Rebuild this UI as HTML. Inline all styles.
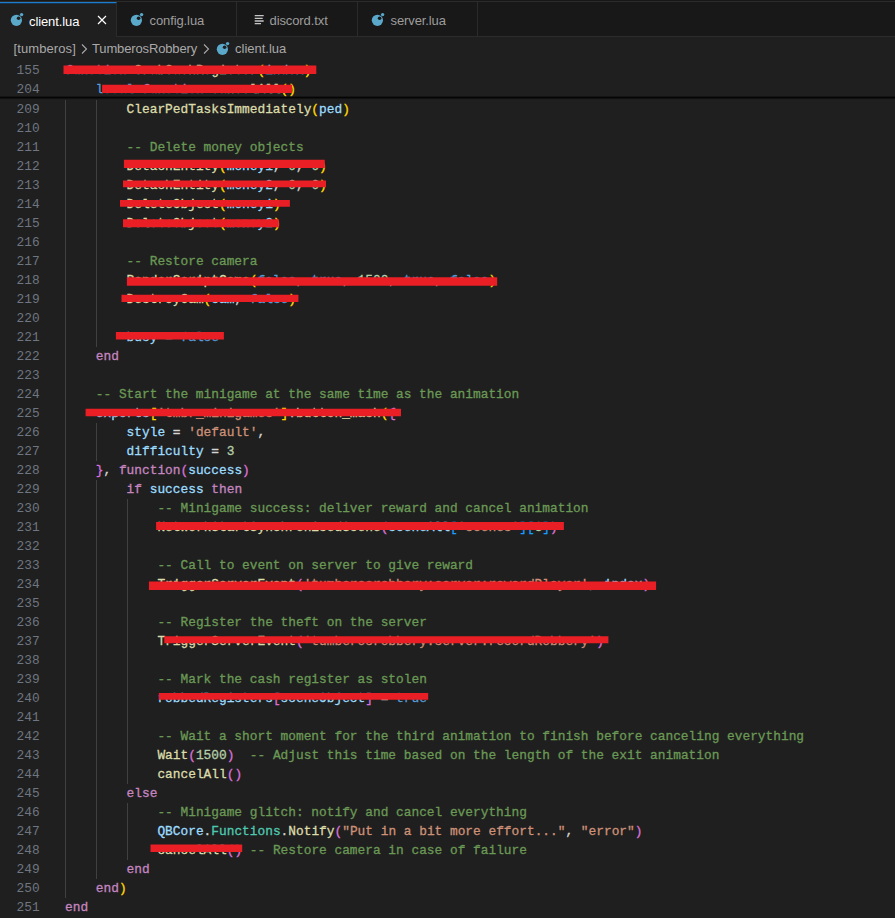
<!DOCTYPE html>
<html lang="en">
<head>
<meta charset="utf-8">
<title>client.lua - TumberosRobbery</title>
<style>
*{box-sizing:border-box;margin:0;padding:0}
html,body{width:895px;height:918px;overflow:hidden;background:#1f1f1f}
body{position:relative;font-family:"Liberation Sans",sans-serif;color:#ccc}
.titleedge{position:absolute;left:0;top:0;width:895px;height:2px;background:#181818;border-bottom:1px solid #2b2b2b}
.tabs{position:absolute;left:0;top:2px;width:895px;height:35px;background:#181818;border-bottom:1px solid #2b2b2b}
.tab{position:absolute;top:0;height:35px;border-right:1px solid #2b2b2b;font-size:13px;color:#9d9d9d;line-height:35px;white-space:nowrap}
.tab.active{background:#1f1f1f;color:#fff;height:35px;top:0;border-top:1px solid #1c7ccf;line-height:35px;box-shadow:inset 0 1px 0 rgba(0,110,200,.3)}
.tab .lbl{position:absolute;left:32.500px;top:0.500px;letter-spacing:-0.1px}.tab.active .lbl{left:29px;letter-spacing:-0.1px}
.tab svg.ic{position:absolute;left:12px;top:8.700px}.tab.active svg.ic{left:9px;top:7.900px}
.tab .x{position:absolute;left:97px;top:12px}
.crumbs{position:absolute;left:0;top:37px;width:895px;height:22px;background:#1f1f1f;font-size:13px;line-height:22px;color:#a9a9a9;white-space:nowrap}
.crumbs span{position:absolute;top:1px}.crumbs svg{position:absolute}
.editor{position:absolute;left:0;top:0;width:895px;height:918px;font-family:"Liberation Mono",monospace;font-size:12.83px;line-height:19px;white-space:pre}
.ln{position:absolute;left:0;width:895px;height:19px}
.no{position:absolute;left:0;width:39.6px;text-align:right;color:#6e7681}
.cd{position:absolute;top:0;-webkit-text-stroke:0.3px;transform:scaleY(1.045);transform-origin:0 14.300px}
.g{position:absolute;top:0;width:1px;height:19px;background:#404040}
.sticky-shadow{position:absolute;left:0;top:96px;width:895px;height:4px;background:linear-gradient(rgba(0,0,0,.35) 0,rgba(0,0,0,.35) 1px,#050505 1px,#050505 2px,rgba(0,0,0,.45) 2px,rgba(0,0,0,.45) 3px,rgba(0,0,0,0.08) 3px,rgba(0,0,0,0.08) 4px)}
.k{color:#c586c0}.b{color:#569cd6}.f{color:#dcdcaa}.v{color:#9cdcfe}.c{color:#6a9955}.s{color:#ce9178}
.n{color:#b5cea8}.w{color:#d4d4d4}.y{color:#ffd700}.p{color:#da70d6}.u{color:#179fff}.t{color:#4ec9b0}
svg.strokes{position:absolute;left:0;top:0}
</style>
</head>
<body>
<div class="titleedge"></div>
<div class="tabs">
  <div class="tab active" style="left:0;width:117px">
    <svg class="ic" width="16" height="16" viewBox="0 0 16 16"><circle cx="7.4" cy="9.3" r="5.6" fill="#5aa9cb"/><circle cx="12.6" cy="3.6" r="1.7" fill="#5aa9cb"/><circle cx="9.6" cy="7.2" r="1.8" fill="#1f1f1f"/></svg>
    <span class="lbl">client.lua</span>
    <svg class="x" width="10" height="10" viewBox="0 0 10 10"><path d="M1 1 L9 9 M9 1 L1 9" stroke="#fff" stroke-width="1.2" fill="none"/></svg>
  </div>
  <div class="tab" style="left:117px;width:120px">
    <svg class="ic" width="16" height="16" viewBox="0 0 16 16"><circle cx="7.4" cy="9.3" r="5.6" fill="#5aa9cb"/><circle cx="12.6" cy="3.6" r="1.7" fill="#5aa9cb"/><circle cx="9.6" cy="7.2" r="1.8" fill="#181818"/></svg>
    <span class="lbl">config.lua</span>
  </div>
  <div class="tab" style="left:237px;width:121px">
    <svg class="ic" width="16" height="16" viewBox="0 0 16 16"><path d="M5.700 4.700h9M5.700 7.300h8M5.700 10h9M5.700 12.600h6.300" stroke="#c5c5c5" stroke-width="1.3" fill="none"/></svg>
    <span class="lbl">discord.txt</span>
  </div>
  <div class="tab" style="left:358px;width:120px">
    <svg class="ic" width="16" height="16" viewBox="0 0 16 16"><circle cx="7.4" cy="9.3" r="5.6" fill="#5aa9cb"/><circle cx="12.6" cy="3.6" r="1.7" fill="#5aa9cb"/><circle cx="9.6" cy="7.2" r="1.8" fill="#181818"/></svg>
    <span class="lbl">server.lua</span>
  </div>
</div>
<div class="crumbs">
  <span style="left:13.500px;letter-spacing:0.1px">[tumberos]</span>
  <svg style="left:78px;top:6px" width="12" height="12" viewBox="0 0 12 12"><path d="M4 1.5 L8.500 6 L4 10.500" stroke="#a9a9a9" stroke-width="1.1" fill="none"/></svg>
  <span style="left:92px;letter-spacing:-0.14px">TumberosRobbery</span>
  <svg style="left:200px;top:6px" width="12" height="12" viewBox="0 0 12 12"><path d="M4 1.5 L8.500 6 L4 10.500" stroke="#a9a9a9" stroke-width="1.1" fill="none"/></svg>
  <svg style="left:215px;top:3px" width="16" height="16" viewBox="0 0 16 16"><circle cx="7.4" cy="9.3" r="5.6" fill="#5aa9cb"/><circle cx="12.6" cy="3.6" r="1.700" fill="#5aa9cb"/><circle cx="9.6" cy="7.2" r="1.8" fill="#1f1f1f"/></svg>
  <span style="left:235px">client.lua</span>
</div>
<div class="editor">
<div class="ln" style="top:61px"><span class="no">155</span><span class="cd" style="left:65.0px"><span class="k">function</span><span class="w"> </span><span class="f">GrabCashRegister</span><span class="y">(</span><span class="v">index</span><span class="y">)</span></span></div>
<div class="ln" style="top:80px"><span class="no">204</span><span class="cd" style="left:95.8px"><span class="b">local</span><span class="w"> </span><span class="k">function</span><span class="w"> </span><span class="f">cancelAll</span><span class="y">(</span><span class="y">)</span></span></div>
<div class="ln" style="top:100px"><span class="no">209</span><i class="g" style="left:65.0px"></i><i class="g" style="left:95.8px"></i><span class="cd" style="left:126.6px"><span class="f">ClearPedTasksImmediately</span><span class="y">(</span><span class="v">ped</span><span class="y">)</span></span></div>
<div class="ln" style="top:119px"><span class="no">210</span><i class="g" style="left:65.0px"></i><i class="g" style="left:95.8px"></i><span class="cd" style="left:65.0px"></span></div>
<div class="ln" style="top:138px"><span class="no">211</span><i class="g" style="left:65.0px"></i><i class="g" style="left:95.8px"></i><span class="cd" style="left:126.6px"><span class="c">-- Delete money objects</span></span></div>
<div class="ln" style="top:157px"><span class="no">212</span><i class="g" style="left:65.0px"></i><i class="g" style="left:95.8px"></i><span class="cd" style="left:126.6px"><span class="f">DetachEntity</span><span class="y">(</span><span class="v">money1</span><span class="w">, </span><span class="n">0</span><span class="w">, </span><span class="n">0</span><span class="y">)</span></span></div>
<div class="ln" style="top:176px"><span class="no">213</span><i class="g" style="left:65.0px"></i><i class="g" style="left:95.8px"></i><span class="cd" style="left:126.6px"><span class="f">DetachEntity</span><span class="y">(</span><span class="v">money2</span><span class="w">, </span><span class="n">0</span><span class="w">, </span><span class="n">0</span><span class="y">)</span></span></div>
<div class="ln" style="top:195px"><span class="no">214</span><i class="g" style="left:65.0px"></i><i class="g" style="left:95.8px"></i><span class="cd" style="left:126.6px"><span class="f">DeleteObject</span><span class="y">(</span><span class="v">money1</span><span class="y">)</span></span></div>
<div class="ln" style="top:214px"><span class="no">215</span><i class="g" style="left:65.0px"></i><i class="g" style="left:95.8px"></i><span class="cd" style="left:126.6px"><span class="f">DeleteObject</span><span class="y">(</span><span class="v">money2</span><span class="y">)</span></span></div>
<div class="ln" style="top:233px"><span class="no">216</span><i class="g" style="left:65.0px"></i><i class="g" style="left:95.8px"></i><span class="cd" style="left:65.0px"></span></div>
<div class="ln" style="top:252px"><span class="no">217</span><i class="g" style="left:65.0px"></i><i class="g" style="left:95.8px"></i><span class="cd" style="left:126.6px"><span class="c">-- Restore camera</span></span></div>
<div class="ln" style="top:271px"><span class="no">218</span><i class="g" style="left:65.0px"></i><i class="g" style="left:95.8px"></i><span class="cd" style="left:126.6px"><span class="f">RenderScriptCams</span><span class="y">(</span><span class="b">false</span><span class="w">, </span><span class="b">true</span><span class="w">, </span><span class="n">1500</span><span class="w">, </span><span class="b">true</span><span class="w">, </span><span class="b">false</span><span class="y">)</span></span></div>
<div class="ln" style="top:290px"><span class="no">219</span><i class="g" style="left:65.0px"></i><i class="g" style="left:95.8px"></i><span class="cd" style="left:126.6px"><span class="f">DestroyCam</span><span class="y">(</span><span class="v">cam</span><span class="w">, </span><span class="b">false</span><span class="y">)</span></span></div>
<div class="ln" style="top:309px"><span class="no">220</span><i class="g" style="left:65.0px"></i><i class="g" style="left:95.8px"></i><span class="cd" style="left:65.0px"></span></div>
<div class="ln" style="top:328px"><span class="no">221</span><i class="g" style="left:65.0px"></i><i class="g" style="left:95.8px"></i><span class="cd" style="left:126.6px"><span class="v">busy</span><span class="w"> = </span><span class="b">false</span></span></div>
<div class="ln" style="top:347px"><span class="no">222</span><i class="g" style="left:65.0px"></i><span class="cd" style="left:95.8px"><span class="k">end</span></span></div>
<div class="ln" style="top:366px"><span class="no">223</span><i class="g" style="left:65.0px"></i><span class="cd" style="left:65.0px"></span></div>
<div class="ln" style="top:385px"><span class="no">224</span><i class="g" style="left:65.0px"></i><span class="cd" style="left:95.8px"><span class="c">-- Start the minigame at the same time as the animation</span></span></div>
<div class="ln" style="top:404px"><span class="no">225</span><i class="g" style="left:65.0px"></i><span class="cd" style="left:95.8px"><span class="v">exports</span><span class="y">[</span><span class="s">'tmbr_minigames'</span><span class="y">]</span><span class="w">:</span><span class="f">button_mash</span><span class="y">(</span><span class="p">{</span></span></div>
<div class="ln" style="top:423px"><span class="no">226</span><i class="g" style="left:65.0px"></i><i class="g" style="left:95.8px"></i><span class="cd" style="left:126.6px"><span class="v">style</span><span class="w"> = </span><span class="s">'default'</span><span class="w">,</span></span></div>
<div class="ln" style="top:442px"><span class="no">227</span><i class="g" style="left:65.0px"></i><i class="g" style="left:95.8px"></i><span class="cd" style="left:126.6px"><span class="v">difficulty</span><span class="w"> = </span><span class="n">3</span></span></div>
<div class="ln" style="top:461px"><span class="no">228</span><i class="g" style="left:65.0px"></i><span class="cd" style="left:95.8px"><span class="p">}</span><span class="w">, </span><span class="k">function</span><span class="p">(</span><span class="v">success</span><span class="p">)</span></span></div>
<div class="ln" style="top:480px"><span class="no">229</span><i class="g" style="left:65.0px"></i><i class="g" style="left:95.8px"></i><span class="cd" style="left:126.6px"><span class="k">if</span><span class="w"> </span><span class="v">success</span><span class="w"> </span><span class="k">then</span></span></div>
<div class="ln" style="top:499px"><span class="no">230</span><i class="g" style="left:65.0px"></i><i class="g" style="left:95.8px"></i><i class="g" style="left:126.6px"></i><span class="cd" style="left:157.4px"><span class="c">-- Minigame success: deliver reward and cancel animation</span></span></div>
<div class="ln" style="top:518px"><span class="no">231</span><i class="g" style="left:65.0px"></i><i class="g" style="left:95.8px"></i><i class="g" style="left:126.6px"></i><span class="cd" style="left:157.4px"><span class="f">NetworkStartSynchronisedScene</span><span class="p">(</span><span class="v">sceneAll</span><span class="u">[</span><span class="s">'scenes'</span><span class="u">]</span><span class="u">[</span><span class="n">3</span><span class="u">]</span><span class="p">)</span></span></div>
<div class="ln" style="top:537px"><span class="no">232</span><i class="g" style="left:65.0px"></i><i class="g" style="left:95.8px"></i><i class="g" style="left:126.6px"></i><span class="cd" style="left:65.0px"></span></div>
<div class="ln" style="top:556px"><span class="no">233</span><i class="g" style="left:65.0px"></i><i class="g" style="left:95.8px"></i><i class="g" style="left:126.6px"></i><span class="cd" style="left:157.4px"><span class="c">-- Call to event on server to give reward</span></span></div>
<div class="ln" style="top:575px"><span class="no">234</span><i class="g" style="left:65.0px"></i><i class="g" style="left:95.8px"></i><i class="g" style="left:126.6px"></i><span class="cd" style="left:157.4px"><span class="f">TriggerServerEvent</span><span class="p">(</span><span class="s">'tumberosrobbery:server:rewardPlayer'</span><span class="w">, </span><span class="v">index</span><span class="p">)</span></span></div>
<div class="ln" style="top:594px"><span class="no">235</span><i class="g" style="left:65.0px"></i><i class="g" style="left:95.8px"></i><i class="g" style="left:126.6px"></i><span class="cd" style="left:65.0px"></span></div>
<div class="ln" style="top:613px"><span class="no">236</span><i class="g" style="left:65.0px"></i><i class="g" style="left:95.8px"></i><i class="g" style="left:126.6px"></i><span class="cd" style="left:157.4px"><span class="c">-- Register the theft on the server</span></span></div>
<div class="ln" style="top:632px"><span class="no">237</span><i class="g" style="left:65.0px"></i><i class="g" style="left:95.8px"></i><i class="g" style="left:126.6px"></i><span class="cd" style="left:157.4px"><span class="f">TriggerServerEvent</span><span class="p">(</span><span class="s">'tumberosrobbery:server:recordRobbery'</span><span class="p">)</span></span></div>
<div class="ln" style="top:651px"><span class="no">238</span><i class="g" style="left:65.0px"></i><i class="g" style="left:95.8px"></i><i class="g" style="left:126.6px"></i><span class="cd" style="left:65.0px"></span></div>
<div class="ln" style="top:670px"><span class="no">239</span><i class="g" style="left:65.0px"></i><i class="g" style="left:95.8px"></i><i class="g" style="left:126.6px"></i><span class="cd" style="left:157.4px"><span class="c">-- Mark the cash register as stolen</span></span></div>
<div class="ln" style="top:689px"><span class="no">240</span><i class="g" style="left:65.0px"></i><i class="g" style="left:95.8px"></i><i class="g" style="left:126.6px"></i><span class="cd" style="left:157.4px"><span class="v">robbedRegisters</span><span class="p">[</span><span class="v">sceneObject</span><span class="p">]</span><span class="w"> = </span><span class="b">true</span></span></div>
<div class="ln" style="top:708px"><span class="no">241</span><i class="g" style="left:65.0px"></i><i class="g" style="left:95.8px"></i><i class="g" style="left:126.6px"></i><span class="cd" style="left:65.0px"></span></div>
<div class="ln" style="top:727px"><span class="no">242</span><i class="g" style="left:65.0px"></i><i class="g" style="left:95.8px"></i><i class="g" style="left:126.6px"></i><span class="cd" style="left:157.4px"><span class="c">-- Wait a short moment for the third animation to finish before canceling everything</span></span></div>
<div class="ln" style="top:746px"><span class="no">243</span><i class="g" style="left:65.0px"></i><i class="g" style="left:95.8px"></i><i class="g" style="left:126.6px"></i><span class="cd" style="left:157.4px"><span class="f">Wait</span><span class="p">(</span><span class="n">1500</span><span class="p">)</span><span class="w">  </span><span class="c">-- Adjust this time based on the length of the exit animation</span></span></div>
<div class="ln" style="top:765px"><span class="no">244</span><i class="g" style="left:65.0px"></i><i class="g" style="left:95.8px"></i><i class="g" style="left:126.6px"></i><span class="cd" style="left:157.4px"><span class="f">cancelAll</span><span class="p">(</span><span class="p">)</span></span></div>
<div class="ln" style="top:784px"><span class="no">245</span><i class="g" style="left:65.0px"></i><i class="g" style="left:95.8px"></i><span class="cd" style="left:126.6px"><span class="k">else</span></span></div>
<div class="ln" style="top:803px"><span class="no">246</span><i class="g" style="left:65.0px"></i><i class="g" style="left:95.8px"></i><i class="g" style="left:126.6px"></i><span class="cd" style="left:157.4px"><span class="c">-- Minigame glitch: notify and cancel everything</span></span></div>
<div class="ln" style="top:822px"><span class="no">247</span><i class="g" style="left:65.0px"></i><i class="g" style="left:95.8px"></i><i class="g" style="left:126.6px"></i><span class="cd" style="left:157.4px"><span class="v">QBCore</span><span class="w">.</span><span class="t">Functions</span><span class="w">.</span><span class="f">Notify</span><span class="p">(</span><span class="s">"Put in a bit more effort..."</span><span class="w">, </span><span class="s">"error"</span><span class="p">)</span></span></div>
<div class="ln" style="top:841px"><span class="no">248</span><i class="g" style="left:65.0px"></i><i class="g" style="left:95.8px"></i><i class="g" style="left:126.6px"></i><span class="cd" style="left:157.4px"><span class="f">cancelAll</span><span class="p">(</span><span class="p">)</span><span class="w"> </span><span class="c">-- Restore camera in case of failure</span></span></div>
<div class="ln" style="top:860px"><span class="no">249</span><i class="g" style="left:65.0px"></i><i class="g" style="left:95.8px"></i><span class="cd" style="left:126.6px"><span class="k">end</span></span></div>
<div class="ln" style="top:879px"><span class="no">250</span><i class="g" style="left:65.0px"></i><span class="cd" style="left:95.8px"><span class="k">end</span><span class="y">)</span></span></div>
<div class="ln" style="top:898px"><span class="no">251</span><span class="cd" style="left:65.0px"><span class="k">end</span></span></div>
<div class="sticky-shadow"></div>
</div>
<svg class="strokes" width="895" height="918" viewBox="0 0 895 918">
<path d="M63.5 65.5H316.3V74.1H63.5Z" fill="#ea1f25"/>
<path d="M102.1 84.8H292.0V93.1H102.1Z" fill="#ea1f25"/>
<path d="M123.9 159.8H324.8V168.0H123.9Z" fill="#ea1f25"/>
<path d="M123.0 180.4H326.0V187.2H123.0Z" fill="#ea1f25"/>
<path d="M120.0 200.0H289.9V206.8H120.0Z" fill="#ea1f25"/>
<path d="M123.0 219.2H278.8V227.3H123.0Z" fill="#ea1f25"/>
<path d="M126.9 277.2H497.2V285.7H126.9Z" fill="#ea1f25"/>
<path d="M121.5 294.8H298.4V302.0H121.5Z" fill="#ea1f25"/>
<path d="M115.9 332.0H223.9V339.6H115.9Z" fill="#ea1f25"/>
<path d="M85.6 408.7H401.0V416.3H85.6Z" fill="#ea1f25"/>
<path d="M156.1 521.9H563.9V529.9H156.1Z" fill="#ea1f25"/>
<path d="M148.9 581.5H656.1V589.9H148.9Z" fill="#ea1f25"/>
<path d="M164.3 636.3H608.4V643.2H164.3Z" fill="#ea1f25"/>
<path d="M158.9 693.1H428.2V699.8H158.9Z" fill="#ea1f25"/>
<path d="M150.5 844.4H242.2V852.0H150.5Z" fill="#ea1f25"/>
</svg>
</body>
</html>
